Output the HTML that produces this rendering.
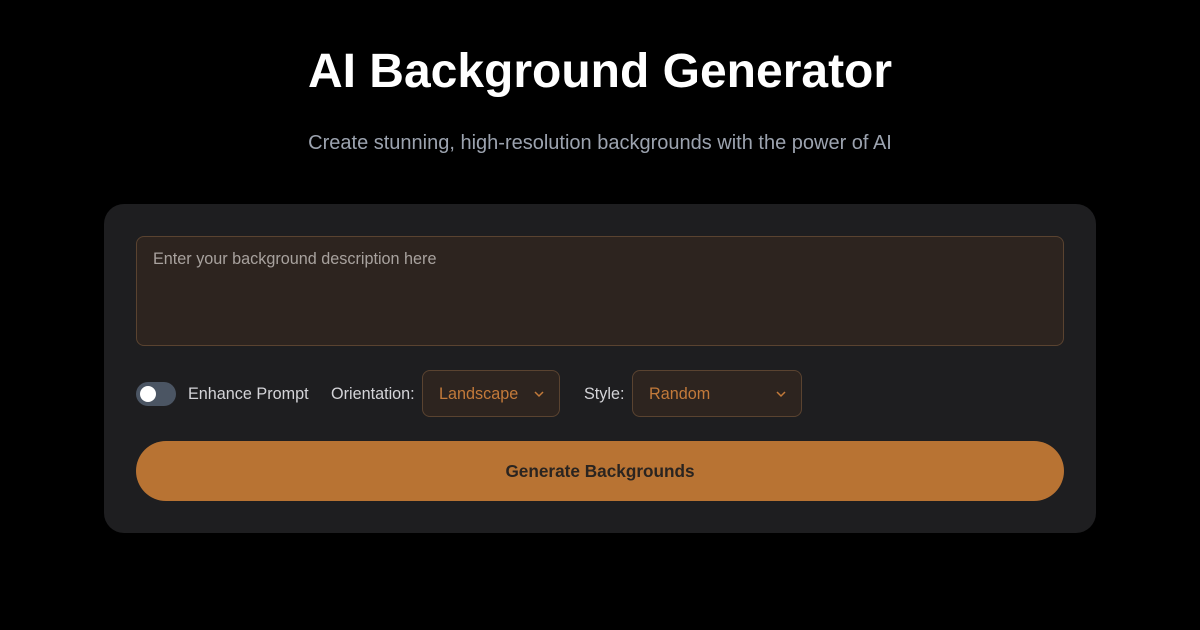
<!DOCTYPE html>
<html><head><style>
body{margin:0;width:1200px;height:630px;background:#000;font-family:"Liberation Sans",sans-serif;position:relative;overflow:hidden}
h1{position:absolute;top:44px;left:0;width:1200px;text-align:center;margin:0;color:#fff;font-size:48px;font-weight:bold;line-height:56px}
.sub{position:absolute;top:131px;left:0;width:1200px;text-align:center;color:#9ca3af;font-size:20px;line-height:24px}
.card{position:absolute;left:104px;top:204px;width:992px;height:329px;background:#1e1e20;border-radius:20px}
.ta{position:absolute;left:32px;top:32px;border:1px solid #5a4330;background:#2d241f;border-radius:8px;color:#a8a29e;font-size:16.2px;padding:13px 16px;box-sizing:border-box;width:928px;height:110px}
.row{position:absolute;top:166px;left:32px;height:47px;width:900px;color:#d4d4d8;font-size:16.2px}
.tog{position:absolute;left:0;top:12px;width:40px;height:24px;border-radius:12px;background:#4b5563}
.tog:after{content:"";position:absolute;left:4px;top:4px;width:16px;height:16px;border-radius:50%;background:#fff}
.lbl{position:absolute;top:15px}
.sel{position:absolute;top:0;border:1px solid #5a4330;background:#2d241f;border-radius:8px;color:#c37a3a;font-size:16.2px;box-sizing:border-box;height:47px}
.sel span{position:absolute;left:16px;top:14px}
.sel svg{position:absolute;top:19px}
.btn{position:absolute;left:32px;top:237px;width:928px;height:60px;border-radius:30px;background:#b87333;color:#2a2420;font-weight:bold;font-size:17.2px;text-align:center;line-height:60px}
</style></head><body>
<h1>AI Background Generator</h1>
<div class="sub">Create stunning, high-resolution backgrounds with the power of AI</div>
<div class="card">
<div class="ta">Enter your background description here</div>
<div class="row">
<div class="tog"></div>
<div class="lbl" style="left:52px">Enhance Prompt</div>
<div class="lbl" style="left:195px">Orientation:</div>
<div class="sel" style="left:286px;width:138px"><span>Landscape</span><svg style="left:111px" width="10" height="8" viewBox="0 0 10 8"><path d="M1 2l4 4 4-4" stroke="#c37a3a" stroke-width="1.5" fill="none"/></svg></div>
<div class="lbl" style="left:448px">Style:</div>
<div class="sel" style="left:496px;width:170px"><span>Random</span><svg style="left:143px" width="10" height="8" viewBox="0 0 10 8"><path d="M1 2l4 4 4-4" stroke="#c37a3a" stroke-width="1.5" fill="none"/></svg></div>
</div>
<div class="btn">Generate Backgrounds</div>
</div>
</body></html>
